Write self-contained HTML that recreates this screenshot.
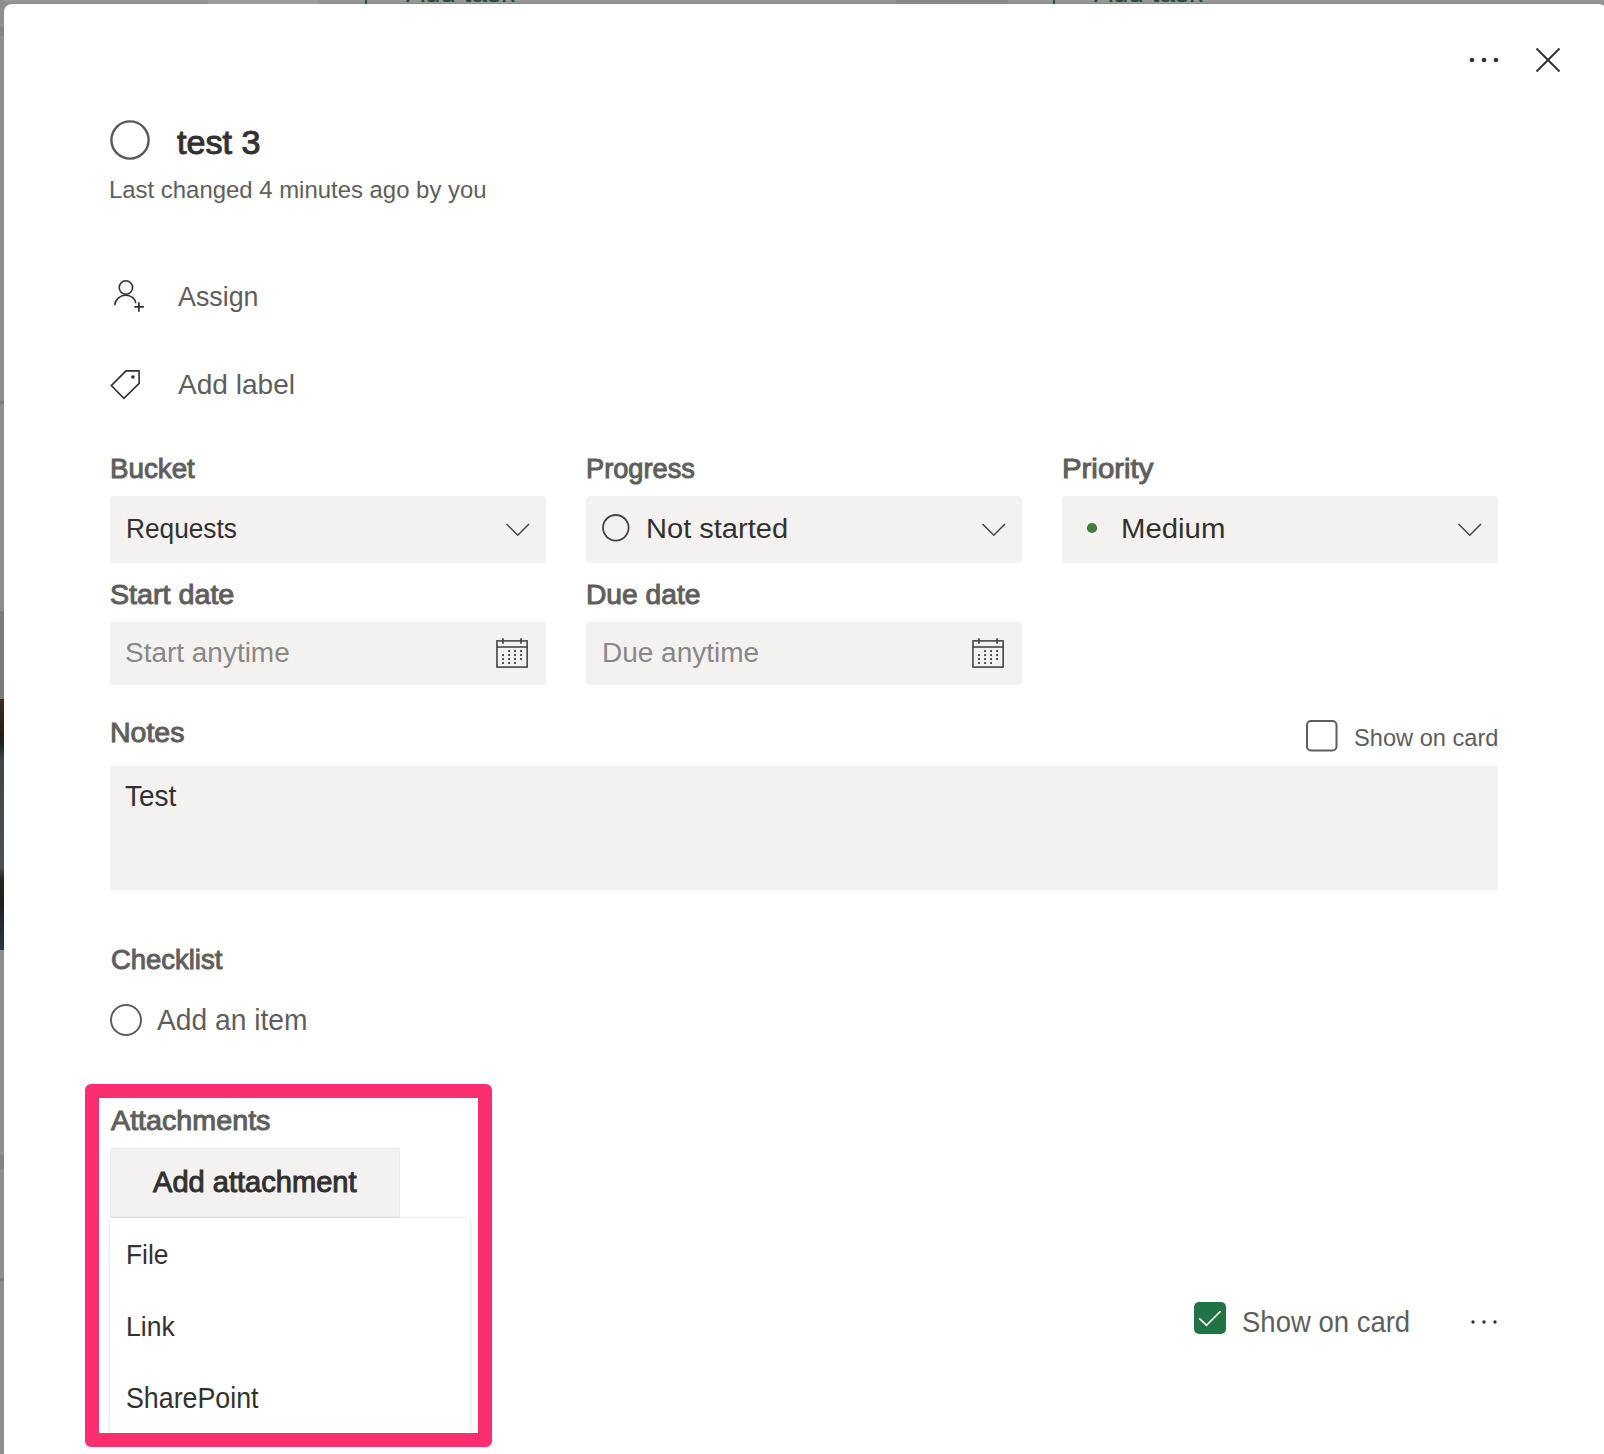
<!DOCTYPE html>
<html><head><meta charset="utf-8"><style>
html,body{margin:0;padding:0;width:1604px;height:1454px;overflow:hidden;background:#8f8f8f;}
body{position:relative;font-family:"Liberation Sans",sans-serif;}
.modal{position:absolute;left:4px;top:4px;width:1603px;height:1470px;background:#fff;border-radius:8px;}
.t{position:absolute;white-space:nowrap;transform-origin:0 0;font-family:"Liberation Sans",sans-serif;}
.box{position:absolute;background:#f3f2f1;border-radius:4px;}
.abs{position:absolute;}
</style></head><body>
<div class="abs" style="left:0;top:0;width:1604px;height:5px;background:linear-gradient(#9a9a9a,#8a8a8a)"></div>
<div class="abs" style="left:208px;top:0;width:111px;height:5px;background:#9c9c9c"></div>
<div class="abs" style="left:896px;top:0;width:112px;height:5px;background:#888"></div>
<div class="abs" style="left:365px;top:0;width:2px;height:4px;background:#2b4f3a"></div>
<div class="t" style="left:406px;top:-21px;font-size:28px;line-height:28px;color:#244a3a">Add task</div>
<div class="abs" style="left:1053px;top:0;width:2px;height:4px;background:#2b4f3a"></div>
<div class="t" style="left:1094px;top:-21px;font-size:28px;line-height:28px;color:#244a3a">Add task</div>
<div class="abs" style="left:0;top:0;width:4px;height:1454px;background:#8e8e8e"></div>
<div class="abs" style="left:0;top:611px;width:4px;height:88px;background:#7c7c7c"></div>
<div class="abs" style="left:0;top:27px;width:4px;height:9px;background:#858585"></div>
<div class="abs" style="left:0;top:401px;width:4px;height:3px;background:#7c7c7c"></div>
<div class="abs" style="left:0;top:1155px;width:4px;height:14px;background:#848484"></div>
<div class="abs" style="left:0;top:1278px;width:4px;height:3px;background:#7c7c7c"></div>
<div class="abs" style="left:0;top:699px;width:4px;height:251px;background:linear-gradient(#3d2b1e 0%,#2a1d14 14%,#1b2226 18%,#3f464a 24%,#4a5256 67%,#2a2420 72%,#22201d 82%,#23394a 100%)"></div>
<div class="modal"></div>
<svg class="abs" style="left:0;top:0" width="1604" height="1454" fill="none">
 <!-- top dots -->
 <g fill="#323130"><circle cx="1472" cy="60" r="2.3"/><circle cx="1484" cy="60" r="2.3"/><circle cx="1496" cy="60" r="2.3"/></g>
 <path d="M1536.5 48.5 L1559.5 71.5 M1559.5 48.5 L1536.5 71.5" stroke="#323130" stroke-width="2"/>
 <!-- title circle -->
 <circle cx="130" cy="140" r="18.6" stroke="#5a5958" stroke-width="2.4"/>
 <!-- assign icon -->
 <g stroke="#323130" stroke-width="1.6">
  <circle cx="125.9" cy="287.5" r="6.7"/>
  <path d="M114.6 305.2 C 115.5 299, 120.2 295.2, 125.8 295.2 C 131.2 295.2, 135.5 299, 135.7 303.2"/>
  <path d="M138.9 302.3 V311.7 M134.3 306.9 H143.9" stroke-width="1.7"/>
 </g>
 <!-- tag icon -->
 <path d="M126 370.9 L139 370.9 L139.2 383.4 L123.9 398.4 L111.3 385.6 Z" stroke="#323130" stroke-width="1.6" stroke-linejoin="miter"/>
 <circle cx="132.9" cy="377" r="1.8" fill="#323130"/>
</svg>
<div class="box" style="left:110px;top:496px;width:436px;height:67px"></div>
<div class="box" style="left:586px;top:496px;width:436px;height:67px"></div>
<div class="box" style="left:1062px;top:496px;width:436px;height:67px"></div>
<div class="box" style="left:110px;top:622px;width:436px;height:63px"></div>
<div class="box" style="left:586px;top:622px;width:436px;height:63px"></div>
<div class="box" style="left:110px;top:766px;width:1388px;height:124px"></div>
<svg class="abs" style="left:0;top:0" width="1604" height="1454" fill="none">
 <g stroke="#484644" stroke-width="1.5">
  <path d="M506.5 524 L517.8 535.3 L529 524"/>
  <path d="M982.5 524 L993.8 535.3 L1005 524"/>
  <path d="M1458.5 524 L1469.8 535.3 L1481 524"/>
 </g>
 <circle cx="615.8" cy="527.8" r="12.8" stroke="#484644" stroke-width="1.8"/>
 <circle cx="1092" cy="528" r="5.1" fill="#3f7e3f"/>
 <rect x="1307" y="721" width="29.5" height="29.5" rx="4" stroke="#605e5c" stroke-width="2"/>
 <circle cx="126" cy="1020" r="15" stroke="#605e5c" stroke-width="2"/>
 <rect x="1194" y="1302" width="32" height="32" rx="5" fill="#217346"/>
 <path d="M1199.3 1318.4 L1206.5 1325.4 L1220.6 1311.2" stroke="#fff" stroke-width="1.6"/>
 <g fill="#323130"><circle cx="1473" cy="1322" r="1.7"/><circle cx="1484" cy="1322" r="1.7"/><circle cx="1495" cy="1322" r="1.7"/></g>
</svg>
<svg width="36" height="32" viewBox="0 0 36 32" style="position:absolute;left:494px;top:638px" fill="none" stroke="#484644" stroke-width="1.6">
<rect x="2.95" y="2.9" width="30.2" height="26.2"/>
<line x1="2.95" y1="9" x2="33.15" y2="9"/>
<line x1="9" y1="0.2" x2="9" y2="5.7" stroke-width="1.7"/>
<line x1="27" y1="0.2" x2="27" y2="5.7" stroke-width="1.7"/>
<g fill="#484644" stroke="none"><rect x="14.1" y="12.1" width="1.9" height="1.9"/><rect x="20.1" y="12.1" width="1.9" height="1.9"/><rect x="26.1" y="12.1" width="1.9" height="1.9"/><rect x="8.1" y="16.1" width="1.9" height="1.9"/><rect x="14.1" y="16.1" width="1.9" height="1.9"/><rect x="20.1" y="16.1" width="1.9" height="1.9"/><rect x="26.1" y="16.1" width="1.9" height="1.9"/><rect x="8.1" y="20.1" width="1.9" height="1.9"/><rect x="14.1" y="20.1" width="1.9" height="1.9"/><rect x="20.1" y="20.1" width="1.9" height="1.9"/><rect x="26.1" y="20.1" width="1.9" height="1.9"/><rect x="8.1" y="24.1" width="1.9" height="1.9"/><rect x="14.1" y="24.1" width="1.9" height="1.9"/><rect x="20.1" y="24.1" width="1.9" height="1.9"/></g></svg>
<svg width="36" height="32" viewBox="0 0 36 32" style="position:absolute;left:970px;top:638px" fill="none" stroke="#484644" stroke-width="1.6">
<rect x="2.95" y="2.9" width="30.2" height="26.2"/>
<line x1="2.95" y1="9" x2="33.15" y2="9"/>
<line x1="9" y1="0.2" x2="9" y2="5.7" stroke-width="1.7"/>
<line x1="27" y1="0.2" x2="27" y2="5.7" stroke-width="1.7"/>
<g fill="#484644" stroke="none"><rect x="14.1" y="12.1" width="1.9" height="1.9"/><rect x="20.1" y="12.1" width="1.9" height="1.9"/><rect x="26.1" y="12.1" width="1.9" height="1.9"/><rect x="8.1" y="16.1" width="1.9" height="1.9"/><rect x="14.1" y="16.1" width="1.9" height="1.9"/><rect x="20.1" y="16.1" width="1.9" height="1.9"/><rect x="26.1" y="16.1" width="1.9" height="1.9"/><rect x="8.1" y="20.1" width="1.9" height="1.9"/><rect x="14.1" y="20.1" width="1.9" height="1.9"/><rect x="20.1" y="20.1" width="1.9" height="1.9"/><rect x="26.1" y="20.1" width="1.9" height="1.9"/><rect x="8.1" y="24.1" width="1.9" height="1.9"/><rect x="14.1" y="24.1" width="1.9" height="1.9"/><rect x="20.1" y="24.1" width="1.9" height="1.9"/></g></svg>
<!-- attachments -->
<div class="abs" style="left:110px;top:1148px;width:288px;height:68px;background:#f3f2f1;border:1px solid #ebe9e7;border-radius:2px"></div>
<div class="abs" style="left:110px;top:1218px;width:360px;height:220px;background:#fff;box-shadow:0 0 3px rgba(0,0,0,0.13),0 1px 4px rgba(0,0,0,0.06)"></div>
<div class="t" style="left:176.7px;top:124.8px;font-size:34px;line-height:34px;font-weight:400;color:#323130;-webkit-text-stroke:1.0px #323130;transform:scaleX(1.0037)">test 3</div><div class="t" style="left:109.0px;top:177.9px;font-size:24.3px;line-height:24.3px;font-weight:400;color:#605e5c;transform:scaleX(0.9842)">Last changed 4 minutes ago by you</div><div class="t" style="left:178.3px;top:281.8px;font-size:28.5px;line-height:28.5px;font-weight:400;color:#605e5c;transform:scaleX(0.9405)">Assign</div><div class="t" style="left:178.3px;top:369.7px;font-size:28.5px;line-height:28.5px;font-weight:400;color:#605e5c;transform:scaleX(0.9846)">Add label</div><div class="t" style="left:110.0px;top:453.7px;font-size:28.4px;line-height:28.4px;font-weight:400;color:#5f5e5c;-webkit-text-stroke:1.0px #5f5e5c;transform:scaleX(0.9765)">Bucket</div><div class="t" style="left:586.0px;top:453.8px;font-size:28.4px;line-height:28.4px;font-weight:400;color:#5f5e5c;-webkit-text-stroke:1.0px #5f5e5c;transform:scaleX(0.9586)">Progress</div><div class="t" style="left:1061.9px;top:453.8px;font-size:28.4px;line-height:28.4px;font-weight:400;color:#5f5e5c;-webkit-text-stroke:1.0px #5f5e5c;transform:scaleX(1.0345)">Priority</div><div class="t" style="left:126.0px;top:513.9px;font-size:28.4px;line-height:28.4px;font-weight:400;color:#323130;transform:scaleX(0.9248)">Requests</div><div class="t" style="left:645.6px;top:513.6px;font-size:28.4px;line-height:28.4px;font-weight:400;color:#323130;transform:scaleX(1.0230)">Not started</div><div class="t" style="left:1121.3px;top:513.6px;font-size:28.4px;line-height:28.4px;font-weight:400;color:#323130;transform:scaleX(1.0330)">Medium</div><div class="t" style="left:110.2px;top:579.8px;font-size:28.4px;line-height:28.4px;font-weight:400;color:#5f5e5c;-webkit-text-stroke:1.0px #5f5e5c;transform:scaleX(1.0099)">Start date</div><div class="t" style="left:586.1px;top:579.8px;font-size:28.4px;line-height:28.4px;font-weight:400;color:#5f5e5c;-webkit-text-stroke:1.0px #5f5e5c;transform:scaleX(0.9929)">Due date</div><div class="t" style="left:125.4px;top:637.6px;font-size:28.4px;line-height:28.4px;font-weight:400;color:#8a8886;transform:scaleX(0.9848)">Start anytime</div><div class="t" style="left:601.9px;top:637.6px;font-size:28.4px;line-height:28.4px;font-weight:400;color:#8a8886;transform:scaleX(0.9859)">Due anytime</div><div class="t" style="left:109.7px;top:717.7px;font-size:28.4px;line-height:28.4px;font-weight:400;color:#5f5e5c;-webkit-text-stroke:1.0px #5f5e5c;transform:scaleX(1.0042)">Notes</div><div class="t" style="left:1353.7px;top:725.9px;font-size:24.3px;line-height:24.3px;font-weight:400;color:#605e5c;transform:scaleX(0.9719)">Show on card</div><div class="t" style="left:125.1px;top:782.1px;font-size:28.6px;line-height:28.6px;font-weight:400;color:#323130;transform:scaleX(0.9784)">Test</div><div class="t" style="left:110.7px;top:945.4px;font-size:28.4px;line-height:28.4px;font-weight:400;color:#5f5e5c;-webkit-text-stroke:1.0px #5f5e5c;transform:scaleX(0.9661)">Checklist</div><div class="t" style="left:157.0px;top:1006.0px;font-size:28.6px;line-height:28.6px;font-weight:400;color:#605e5c;transform:scaleX(0.9854)">Add an item</div><div class="t" style="left:111.0px;top:1106.8px;font-size:28.0px;line-height:28.0px;font-weight:400;color:#5f5e5c;-webkit-text-stroke:1.0px #5f5e5c;transform:scaleX(1.0245)">Attachments</div><div class="t" style="left:152.6px;top:1167.5px;font-size:29.0px;line-height:29.0px;font-weight:400;color:#323130;-webkit-text-stroke:1.0px #323130;transform:scaleX(1.0020)">Add attachment</div><div class="t" style="left:126.1px;top:1239.7px;font-size:28.2px;line-height:28.2px;font-weight:400;color:#323130;transform:scaleX(0.9357)">File</div><div class="t" style="left:126.1px;top:1311.8px;font-size:28.4px;line-height:28.4px;font-weight:400;color:#323130;transform:scaleX(0.9360)">Link</div><div class="t" style="left:125.8px;top:1383.5px;font-size:28.6px;line-height:28.6px;font-weight:400;color:#323130;transform:scaleX(0.9364)">SharePoint</div><div class="t" style="left:1242.0px;top:1307.7px;font-size:28.6px;line-height:28.6px;font-weight:400;color:#605e5c;transform:scaleX(0.9616)">Show on card</div>
<div class="abs" style="left:85px;top:1084px;width:379px;height:335px;border:14px solid #fb2e6f;border-radius:6px"></div>
</body></html>
